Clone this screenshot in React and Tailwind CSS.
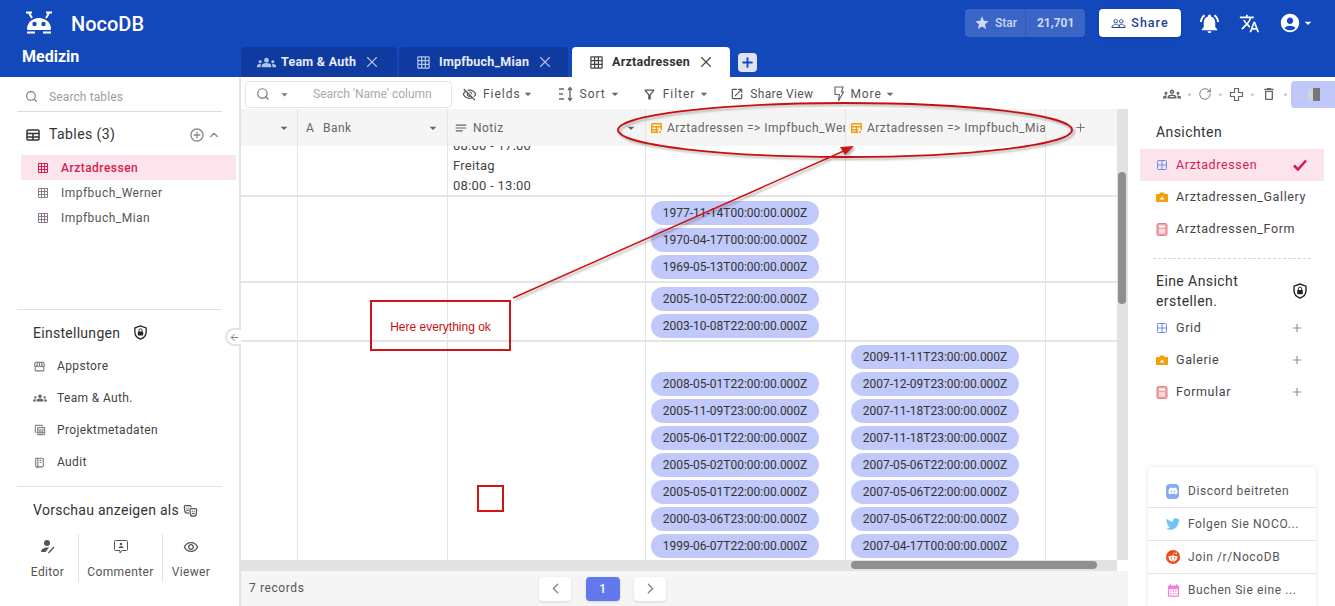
import React from 'react'
import { X, Search, Plus, ChevronUp, ChevronLeft, ChevronRight, ArrowLeft, Grid2x2, RotateCw } from 'lucide-react'
import {
  MdStar, MdNotificationsActive, MdTranslate, MdAccountCircle, MdPeopleOutline, MdGroups, MdOutlineGroups, MdGridOn,
  MdOutlineVisibilityOff, MdOutlineFilterAlt, MdOpenInNew, MdNotes, MdOutlineStorefront,
  MdOutlineTableView, MdOutlineRemoveRedEye, MdAdd, MdOutlineDelete, MdOutlineAddCircleOutline,
  MdCalendarMonth, MdOutlineTableChart, MdArrowDropDown,
} from 'react-icons/md'
import { TbMasksTheater, TbNotebook } from 'react-icons/tb'
import { FaDiscord, FaTwitter, FaRedditAlien } from 'react-icons/fa'

const columns = 'grid grid-cols-[57px_150px_198px_200px_200px_1fr]'

const row2 = ['1977-11-14T00:00:00.000Z', '1970-04-17T00:00:00.000Z', '1969-05-13T00:00:00.000Z']
const row3 = ['2005-10-05T22:00:00.000Z', '2003-10-08T22:00:00.000Z']
const row4a = ['2008-05-01T22:00:00.000Z', '2005-11-09T23:00:00.000Z', '2005-06-01T22:00:00.000Z', '2005-05-02T00:00:00.000Z', '2005-05-01T22:00:00.000Z', '2000-03-06T23:00:00.000Z', '1999-06-07T22:00:00.000Z']
const row4b = ['2009-11-11T23:00:00.000Z', '2007-12-09T23:00:00.000Z', '2007-11-18T23:00:00.000Z', '2007-11-18T23:00:00.000Z', '2007-05-06T22:00:00.000Z', '2007-05-06T22:00:00.000Z', '2007-05-06T22:00:00.000Z', '2007-04-17T00:00:00.000Z']

function Logo() {
  return (
    <svg width="28" height="24" viewBox="0 0 28 24" fill="white">
      <path d="M2 19c0-6 5-11 12-11s12 5 12 11c0 1-1 1-2 1H4c-1 0-2 0-2-1z" />
      <circle cx="9.5" cy="14" r="2.2" fill="#1348ba" />
      <circle cx="18.5" cy="14" r="2.2" fill="#1348ba" />
      <path d="M7 8 4 3M21 8l3-5M1 2.500h6M21 2.500h6" stroke="white" strokeWidth="2" fill="none" />
      <path d="M2 22.500h8M18 22.500h8" stroke="white" strokeWidth="2" />
    </svg>
  )
}

function SortIcon() {
  return (
    <svg width="16" height="16" viewBox="0 0 16 16" fill="none" stroke="#666" strokeWidth="1.300">
      <path d="M1 3h5M1 8h4M1 13h5M12 2v12M10 4l2-2.500L14 4M10 12l2 2.500 2-2.500" />
    </svg>
  )
}

function BoltIcon() {
  return (
    <svg width="10" height="16" viewBox="0 0 10 16" fill="none" stroke="#666" strokeWidth="1.200">
      <path d="M1 1h8L7.500 6H9.500L4.500 15l.8-6.500H1z" />
    </svg>
  )
}

function CheckIcon() {
  return (
    <svg width="14" height="12" viewBox="0 0 14 12" fill="none" stroke="#d81b50" strokeWidth="2.600">
      <path d="M1 6.500 5 10.500 13 1.500" />
    </svg>
  )
}

function RelationIcon() {
  return (
    <svg width="11" height="10" viewBox="0 0 11 10" fill="none" stroke="#f59e0b" strokeWidth="1.400" className="shrink-0 -ml-px">
      <path d="M.7.700h9.600v6.600M.7.700v8.600h6.600M.7 3.800h9.600M.7 6.800h6.600M5.500 3.800v5.500" />
      <path d="M9 8v2" />
    </svg>
  )
}

function ShieldLock({ size = 15 }) {
  return (
    <svg width={size} height={size} viewBox="0 0 16 16" className="shrink-0">
      <path d="M8 1 2 3.200v4.300c0 3.500 2.500 6.300 6 7.500 3.500-1.200 6-4 6-7.500V3.200z" fill="none" stroke="#222" strokeWidth="1.400" />
      <rect x="5.200" y="7" width="5.600" height="4.200" rx="0.600" fill="#222" />
      <path d="M6.300 7V5.800a1.700 1.700 0 0 1 3.400 0V7" fill="none" stroke="#222" />
    </svg>
  )
}

function EditorIcon() {
  return (
    <svg width="16" height="16" viewBox="0 0 16 16" fill="#555">
      <circle cx="7" cy="4" r="3" />
      <path d="M1 13c0-3 3-4.500 6-4.500 1 0 1.500.1 2 .3L5.500 13z" />
      <path d="M8 13.500 13.500 7.500l1 1L9 14.500z" />
    </svg>
  )
}

function CommenterIcon() {
  return (
    <svg width="16" height="16" viewBox="0 0 16 16" fill="none" stroke="#555">
      <path d="M2.500 1.500h11a1 1 0 0 1 1 1v8a1 1 0 0 1-1 1H9l-2 2.500V11.500H2.500a1 1 0 0 1-1-1v-8a1 1 0 0 1 1-1z" />
      <circle cx="8" cy="5" r="1.300" fill="#555" stroke="none" />
      <path d="M5.500 9c0-1.300 1.200-1.800 2.500-1.800s2.500.5 2.500 1.800z" fill="#555" stroke="none" />
    </svg>
  )
}

function GalleryIcon() {
  return (
    <svg width="12" height="12" viewBox="0 0 12 12">
      <path d="M1 3h2.500L4 1.500h4L8.500 3H11a1 1 0 0 1 1 1v6a1 1 0 0 1-1 1H1a1 1 0 0 1-1-1V4a1 1 0 0 1 1-1z" fill="#f59e0b" />
      <path d="M3.500 8.500 6 5.500l2.500 3z" fill="white" />
    </svg>
  )
}

function FormIcon() {
  return (
    <svg width="12" height="13" viewBox="0 0 12 13">
      <rect x="1" y="0.500" width="10" height="12" rx="1.500" fill="#f1a3a8" stroke="#e57f86" />
      <rect x="3" y="2.500" width="6" height="2" fill="white" />
      <rect x="3" y="6" width="6" height="4.500" fill="white" opacity="0.6" />
    </svg>
  )
}

function TablesIcon() {
  return (
    <svg width="14" height="12" viewBox="0 0 14 12" fill="none" stroke="#333" strokeWidth="1.500" className="mr-[9px]">
      <rect x="1" y="1" width="12" height="10" rx="1" />
      <path d="M1 4.500h12M1 8h12M7 4.500V11" />
    </svg>
  )
}

function PlusOutline() {
  return (
    <svg width="15" height="15" viewBox="0 0 15 15" fill="none" stroke="#666" strokeWidth="1.200">
      <path d="M5.500 1.500h4v4h4v4h-4v4h-4v-4h-4v-4h4z" />
    </svg>
  )
}

function Dot() {
  return <span className="w-[3px] h-[3px] rounded-full bg-[#ccc]" />
}

function Tab({ icon, label, active, className, gap }) {
  return (
    <div className={`h-[30px] flex items-center rounded-t ${active ? 'bg-white text-[#333]' : 'bg-[#0f3a9f] text-[#e8ecf8]'} ${className}`}>
      {icon}
      <span className={`text-[12.500px] font-bold tracking-[0.02em] ${gap}`}>{label}</span>
      <X size={18} strokeWidth={1.500} className={`ml-[7px] ${active ? 'text-[#444]' : 'text-[#b5c3e8]'}`} />
    </div>
  )
}

function ToolButton({ icon, label, className, spacing = 'tracking-[0.08em]' }) {
  return (
    <div className={`flex items-center text-[12px] text-[#555] ${spacing} ${className}`}>
      {icon}
      <span className="ml-1.5">{label}</span>
    </div>
  )
}

function Caret({ className }) {
  return <MdArrowDropDown size={16} className={`text-[#666] ${className}`} />
}

function Chip({ value }) {
  return <div className="h-6 w-[168px] rounded-xl bg-[#c0c9f9] text-[#333] text-[12px] flex items-center justify-center whitespace-nowrap">{value}</div>
}

function Chips({ items, className }) {
  return (
    <div className={`flex flex-col gap-[3px] pl-[5px] ${className}`}>
      {items.map((v, i) => <Chip key={i} value={v} />)}
    </div>
  )
}

function SideRow({ icon, label }) {
  return (
    <div className="h-8 flex items-center pl-[33px] text-[12px] text-[#444] tracking-[0.03em]">
      <span className="w-6 flex">{icon}</span>
      {label}
    </div>
  )
}

function HeaderCell({ icon, label, caret, gap }) {
  return (
    <div className="flex items-center pl-[6px] border-r border-[#e5e5e5] text-[12px] text-[#666] tracking-[0.04em] overflow-hidden whitespace-nowrap">
      {icon}
      <span className={`overflow-hidden ${gap}`}>{label}</span>
      {caret && <Caret className="ml-auto mr-[6px] shrink-0" />}
    </div>
  )
}

function Cell({ children, className }) {
  return <div className={`border-r border-[#e5e5e5] ${className || ''}`}>{children}</div>
}

function ViewRow({ icon, label, right, active, className }) {
  return (
    <div className={`h-8 flex items-center pl-4 pr-5 text-[12.500px] tracking-[0.05em] ${active ? 'bg-[#fce4ec] text-[#d81b50]' : 'text-[#444]'} ${className || ''}`}>
      <span className="w-5 flex shrink-0">{icon}</span>
      {label}
      <span className="ml-auto flex">{right}</span>
    </div>
  )
}

function HelpRow({ icon, label }) {
  return (
    <div className="h-[33px] flex items-center pl-[18px] border-b border-[#e3e3e3] text-[12px] text-[#555] tracking-[0.05em] whitespace-nowrap">
      <span className="w-[22px] flex">{icon}</span>
      {label}
    </div>
  )
}

function App() {
  return (
    <div className="relative w-[1335px] h-[606px] overflow-hidden bg-white font-[Roboto,sans-serif] flex flex-col">
      {/* top bar */}
      <div className="h-[77px] bg-[#1348ba] text-white shrink-0 flex flex-col">
        <div className="h-[47px] flex items-start">
          <div className="ml-[25px] mt-[10px]"><Logo /></div>
          <div className="ml-[18px] mt-[9px] text-[20px] font-medium">NocoDB</div>
          <div className="ml-auto mt-[9px] flex items-center">
            <div className="h-7 w-[120px] rounded bg-[#3a64c5] flex items-center text-[12px] font-medium text-[#cfd9f2]">
              <MdStar size={16} className="ml-[9px]" />
              <span className="ml-[5px]">Star</span>
              <span className="ml-[8px] h-7 border-l border-[#2f58bb] pl-[11px] leading-7 font-bold">21,701</span>
            </div>
            <div className="ml-[14px] h-7 w-[82px] rounded bg-white text-[#24418f] shadow flex items-center justify-center text-[12.500px] font-medium tracking-[0.08em]">
              <MdPeopleOutline size={15} className="mr-[5px]" />Share
            </div>
            <MdNotificationsActive size={23} className="ml-[17px]" />
            <MdTranslate size={21} className="ml-[18px]" />
            <MdAccountCircle size={22} className="ml-[19px]" />
            <MdArrowDropDown size={16} className="mr-[19px] -ml-[1px]" />
          </div>
        </div>
        <div className="h-[30px] flex items-end">
          <div className="w-[241px] pl-[22px] h-[30px] text-[16px] font-bold leading-5 self-start">Medizin</div>
          <Tab icon={<MdGroups size={19} className="text-[#b5c3e8]" />} label="Team & Auth" gap="ml-[5px]" className="w-[156px] pl-4" />
          <Tab icon={<MdGridOn size={15} className="text-[#b5c3e8]" />} label="Impfbuch_Mian" gap="ml-2" className="w-[169px] pl-[17px] ml-[2px]" />
          <Tab active icon={<MdGridOn size={15} className="text-[#444]" />} label="Arztadressen" gap="ml-2" className="w-[158px] pl-[17px] ml-[4px]" />
          <div className="ml-2 mb-[5px] w-[19px] h-[19px] rounded-sm bg-[#dfe4f2] text-[#1348ba] flex items-center justify-center"><Plus size={15} strokeWidth={3} /></div>
        </div>
      </div>

      <div className="flex-1 flex min-h-0">
        {/* left sidebar */}
        <div className="relative w-[241px] shrink-0 border-r-2 border-[#e3e3e3] flex flex-col">
          <div className="mx-[17px] h-[35px] pt-[5px] border-b border-[#dcdcdc] flex items-center pl-2 text-[12px] text-[#9e9e9e] tracking-[0.01em]">
            <Search size={13} className="text-[#777] mr-[11px]" />Search tables
          </div>
          <div className="h-[43px] pt-[2px] flex items-center pl-[26px] text-[14px] text-[#333] tracking-[0.03em]">
            <TablesIcon />Tables (3)
            <MdOutlineAddCircleOutline size={16} className="ml-[74px] text-[#888]" />
            <ChevronUp size={14} className="ml-[2px] text-[#888]" />
          </div>
          <div className="ml-[21px] mr-[3px] h-[25px] bg-[#fce4ec] flex items-center pl-4 text-[12px] font-medium text-[#d81b50] tracking-[0.04em]">
            <MdGridOn size={12} className="mr-3" />Arztadressen
          </div>
          <div className="ml-[21px] h-[25px] flex items-center pl-4 text-[12px] text-[#555] tracking-[0.04em]">
            <MdGridOn size={12} className="mr-3 text-[#8a7a8c]" />Impfbuch_Werner
          </div>
          <div className="ml-[21px] h-[25px] flex items-center pl-4 text-[12px] text-[#555] tracking-[0.04em]">
            <MdGridOn size={12} className="mr-3 text-[#8a7a8c]" />Impfbuch_Mian
          </div>
          <div className="mx-[17px] mt-[79px] border-t border-[#e0e0e0]" />
          <div className="h-[40px] pt-[13px] flex items-start pl-[33px] text-[14px] leading-5 text-[#333] tracking-[0.02em]">
            Einstellungen <span className="ml-[13px] mt-[2px]"><ShieldLock /></span>
          </div>
          <SideRow icon={<MdOutlineStorefront size={13} className="text-[#777]" />} label="Appstore" />
          <SideRow icon={<MdGroups size={14} className="text-[#666]" />} label="Team & Auth." />
          <SideRow icon={<MdOutlineTableView size={14} className="text-[#888]" />} label="Projektmetadaten" />
          <SideRow icon={<TbNotebook size={13} className="text-[#777]" />} label="Audit" />
          <div className="mx-[17px] mt-2 border-t border-[#e0e0e0]" />
          <div className="h-[47px] flex items-center pl-[33px] text-[14px] text-[#333] tracking-[0.02em]">
            Vorschau anzeigen als <TbMasksTheater size={15} className="ml-1 text-[#555]" />
          </div>
          <div className="flex h-12 text-[12px] text-[#555] tracking-[0.03em]">
            <div className="ml-[17px] w-[62px] border-r border-[#e0e0e0] flex flex-col items-center justify-center gap-2 pt-[3px]">
              <EditorIcon />Editor
            </div>
            <div className="w-[84px] border-r border-[#e0e0e0] flex flex-col items-center justify-center gap-2 pt-[3px]">
              <CommenterIcon />Commenter
            </div>
            <div className="w-[56px] flex flex-col items-center justify-center gap-2 pt-[3px]">
              <MdOutlineRemoveRedEye size={16} className="text-[#555]" />Viewer
            </div>
          </div>
          <div className="absolute right-[-2px] top-[251px] w-4 h-[18px] rounded-l-full border-2 border-r-0 border-[#e3e3e3] bg-white flex items-center justify-center">
            <ArrowLeft size={11} className="text-[#777]" />
          </div>
        </div>

        <div className="flex-1 flex flex-col min-w-0">
          {/* toolbar */}
          <div className="h-[32px] shrink-0 pt-[2px] flex items-center">
            <div className="ml-1 w-[207px] h-[27px] rounded border border-[#e6e6e6] flex items-center text-[12px] text-[#aaa]">
              <Search size={14} className="ml-[10px] text-[#777]" />
              <MdArrowDropDown size={15} className="ml-[7px] text-[#777]" />
              <span className="ml-[21px]">Search 'Name' column</span>
            </div>
            <ToolButton className="ml-[10px]" icon={<MdOutlineVisibilityOff size={15} />} label="Fields" />
            <Caret className="-ml-[1px]" />
            <ToolButton className="ml-[22px]" icon={<SortIcon />} label="Sort" />
            <Caret className="ml-[1px]" />
            <ToolButton className="ml-[19px]" icon={<MdOutlineFilterAlt size={15} />} label="Filter" />
            <Caret className="ml-[1px]" />
            <ToolButton className="ml-[18px]" spacing="tracking-[0.03em]" icon={<MdOpenInNew size={14} />} label="Share View" />
            <ToolButton className="ml-[21px]" icon={<BoltIcon />} label="More" />
            <Caret />
            <div className="ml-auto flex items-center gap-[7px] text-[#666]">
              <MdOutlineGroups size={18} />
              <Dot />
              <RotateCw size={14} strokeWidth={1.500} />
              <Dot />
              <PlusOutline />
              <Dot />
              <MdOutlineDelete size={16} />
              <Dot />
              <div className="-ml-[3px] w-11 h-[27px] rounded-l bg-[#bfc8f9] flex items-center justify-center">
                <svg width="13" height="13" viewBox="0 0 13 13"><path d="M1 1h11v11H1z" fill="#cfd3e6" /><path d="M6 0h7v13H6z" fill="#777" /></svg>
              </div>
            </div>
          </div>

          <div className="flex-1 flex min-h-0">
            {/* main column */}
            <div className="w-[887px] shrink-0 flex flex-col">
              <div className="flex-1 flex min-h-0">
                <div className="w-[876px] flex flex-col overflow-hidden">
                  <div className={`${columns} h-[37px] shrink-0 bg-[#f5f5f5]`}>
                    <div className="flex items-center justify-end pr-[5px] border-r border-[#e5e5e5]"><Caret /></div>
                    <HeaderCell icon={<span className="text-[12px] w-4 pl-[2px]">A</span>} label="Bank" gap="ml-[3px]" caret />
                    <HeaderCell icon={<MdNotes size={14} />} label="Notiz" gap="ml-[5px]" caret />
                    <HeaderCell icon={<RelationIcon />} label="Arztadressen => Impfbuch_Werner" gap="ml-[5px]" />
                    <HeaderCell icon={<RelationIcon />} label="Arztadressen => Impfbuch_Mian" gap="ml-[5px]" />
                    <div className="flex items-center pl-[28px] text-[#777]"><Plus size={13} /></div>
                  </div>
                  <div className={`${columns} h-[51px] shrink-0 border-b-2 border-[#e5e5e5]`}>
                    <Cell /><Cell />
                    <Cell className="overflow-hidden flex flex-col justify-end pl-[5px] text-[13px] leading-5 text-[#444] tracking-[0.02em]">
                      <div>08:00 - 17:00</div><div>Freitag</div><div className="-mb-px">08:00 - 13:00</div>
                    </Cell>
                    <Cell /><Cell />
                  </div>
                  <div className={`${columns} h-[86px] shrink-0 border-b-2 border-[#e5e5e5]`}>
                    <Cell /><Cell /><Cell />
                    <Cell><Chips items={row2} className="pt-1" /></Cell>
                    <Cell />
                  </div>
                  <div className={`${columns} h-[59px] shrink-0 border-b-2 border-[#e5e5e5]`}>
                    <Cell /><Cell /><Cell />
                    <Cell><Chips items={row3} className="pt-1" /></Cell>
                    <Cell />
                  </div>
                  <div className={`${columns} flex-1 min-h-0 overflow-hidden`}>
                    <Cell /><Cell /><Cell />
                    <Cell><Chips items={row4a} className="pt-[30px]" /></Cell>
                    <Cell><Chips items={row4b} className="pt-[3px]" /></Cell>
                  </div>
                  <div className="h-[11px] shrink-0 bg-[#e2e2e2] flex">
                    <div className="ml-[610px] w-[246px] h-[8px] mt-[1px] rounded bg-[#8f8f8f]" />
                  </div>
                </div>
                <div className="w-[11px] bg-[#e2e2e2] mb-[11px]">
                  <div className="mt-[63px] h-[132px] w-2 ml-[1px] rounded bg-[#8f8f8f]" />
                </div>
              </div>
              <div className="h-[35px] shrink-0 bg-[#f5f5f5] flex items-center text-[12px] text-[#555] tracking-[0.05em]">
                <span className="ml-2 w-[290px] -mt-0.5">7 records</span>
                <div className="w-8 h-6 rounded bg-white shadow-sm flex items-center justify-center"><ChevronLeft size={17} className="text-[#888]" /></div>
                <div className="ml-[15px] w-[34px] h-6 rounded bg-[#6478ee] text-white shadow flex items-center justify-center font-medium">1</div>
                <div className="ml-[14px] w-8 h-6 rounded bg-white shadow-sm flex items-center justify-center"><ChevronRight size={17} className="text-[#888]" /></div>
              </div>
            </div>

            {/* right panel */}
            <div className="flex-1 flex flex-col pl-3 min-w-0">
              <div className="h-[40px] pt-[6px] pl-4 flex items-center text-[14px] text-[#333] tracking-[0.03em]">Ansichten</div>
              <div className="mr-[11px]">
                <ViewRow active icon={<Grid2x2 size={12} className="text-[#6b8fe8]" />} label="Arztadressen" right={<span className="-mr-[3px]"><CheckIcon /></span>} />
                <ViewRow icon={<GalleryIcon />} label="Arztadressen_Gallery" />
                <ViewRow icon={<FormIcon />} label="Arztadressen_Form" />
              </div>
              <div className="ml-[13px] mr-6 mt-[13px] border-t border-dashed border-[#d8d8d8]" />
              <div className="h-[47px] mt-2 pl-4 pr-[27px] flex items-center justify-between text-[14px] leading-5 text-[#333] tracking-[0.03em]">
                <span>Eine Ansicht<br />erstellen.</span>
                <ShieldLock size={16} />
              </div>
              <div className="mr-[11px] -mt-[2px]">
                <ViewRow icon={<Grid2x2 size={12} className="text-[#6b8fe8]" />} label="Grid" right={<MdAdd size={14} className="text-[#7f9f8f]" />} />
                <ViewRow icon={<GalleryIcon />} label="Galerie" right={<MdAdd size={14} className="text-[#7f9f8f]" />} />
                <ViewRow icon={<FormIcon />} label="Formular" right={<MdAdd size={14} className="text-[#7f9f8f]" />} />
              </div>
              <div className="mt-auto ml-2 mr-[19px] h-[139px] rounded-t shadow-[0_0_4px_rgba(0,0,0,0.12)] pt-[8px] overflow-hidden">
                <HelpRow icon={<span className="w-[13px] h-[15px] rounded-sm bg-[#8aa9f5] flex items-center justify-center"><FaDiscord size={10} color="white" /></span>} label="Discord beitreten" />
                <HelpRow icon={<FaTwitter size={14} className="text-[#6cc5f5]" />} label="Folgen Sie NOCO..." />
                <HelpRow icon={<span className="w-[14px] h-[14px] rounded-full bg-[#ee4a1a] flex items-center justify-center"><FaRedditAlien size={10} color="white" /></span>} label="Join /r/NocoDB" />
                <HelpRow icon={<MdCalendarMonth size={15} className="text-[#f080d8]" />} label="Buchen Sie eine ..." />
              </div>
            </div>
          </div>
        </div>
      </div>

      {/* red annotations drawn over the screenshot */}
      <svg className="absolute inset-0 pointer-events-none drop-shadow-[2px_2px_1px_rgba(0,0,0,0.3)]" width="1335" height="606" fill="none">
        <ellipse cx="845" cy="130" rx="227" ry="27" stroke="#c80f0f" strokeWidth="1.800" />
        <path d="M513 298 846 150" stroke="#d01414" strokeWidth="1.500" />
        <path d="M854 146 840 147 845 155z" fill="#d01414" />
      </svg>
      <div className="absolute left-[370px] top-[300px] w-[141px] h-[51px] border-2 border-[#d01414] flex items-center justify-center pt-[3px] text-[12px] text-[#c81010] font-['Liberation_Sans',sans-serif]">Here everything ok</div>
      <div className="absolute left-[477px] top-[485px] w-[27px] h-[27px] border-2 border-[#d01414]" />
    </div>
  )
}

export default App
